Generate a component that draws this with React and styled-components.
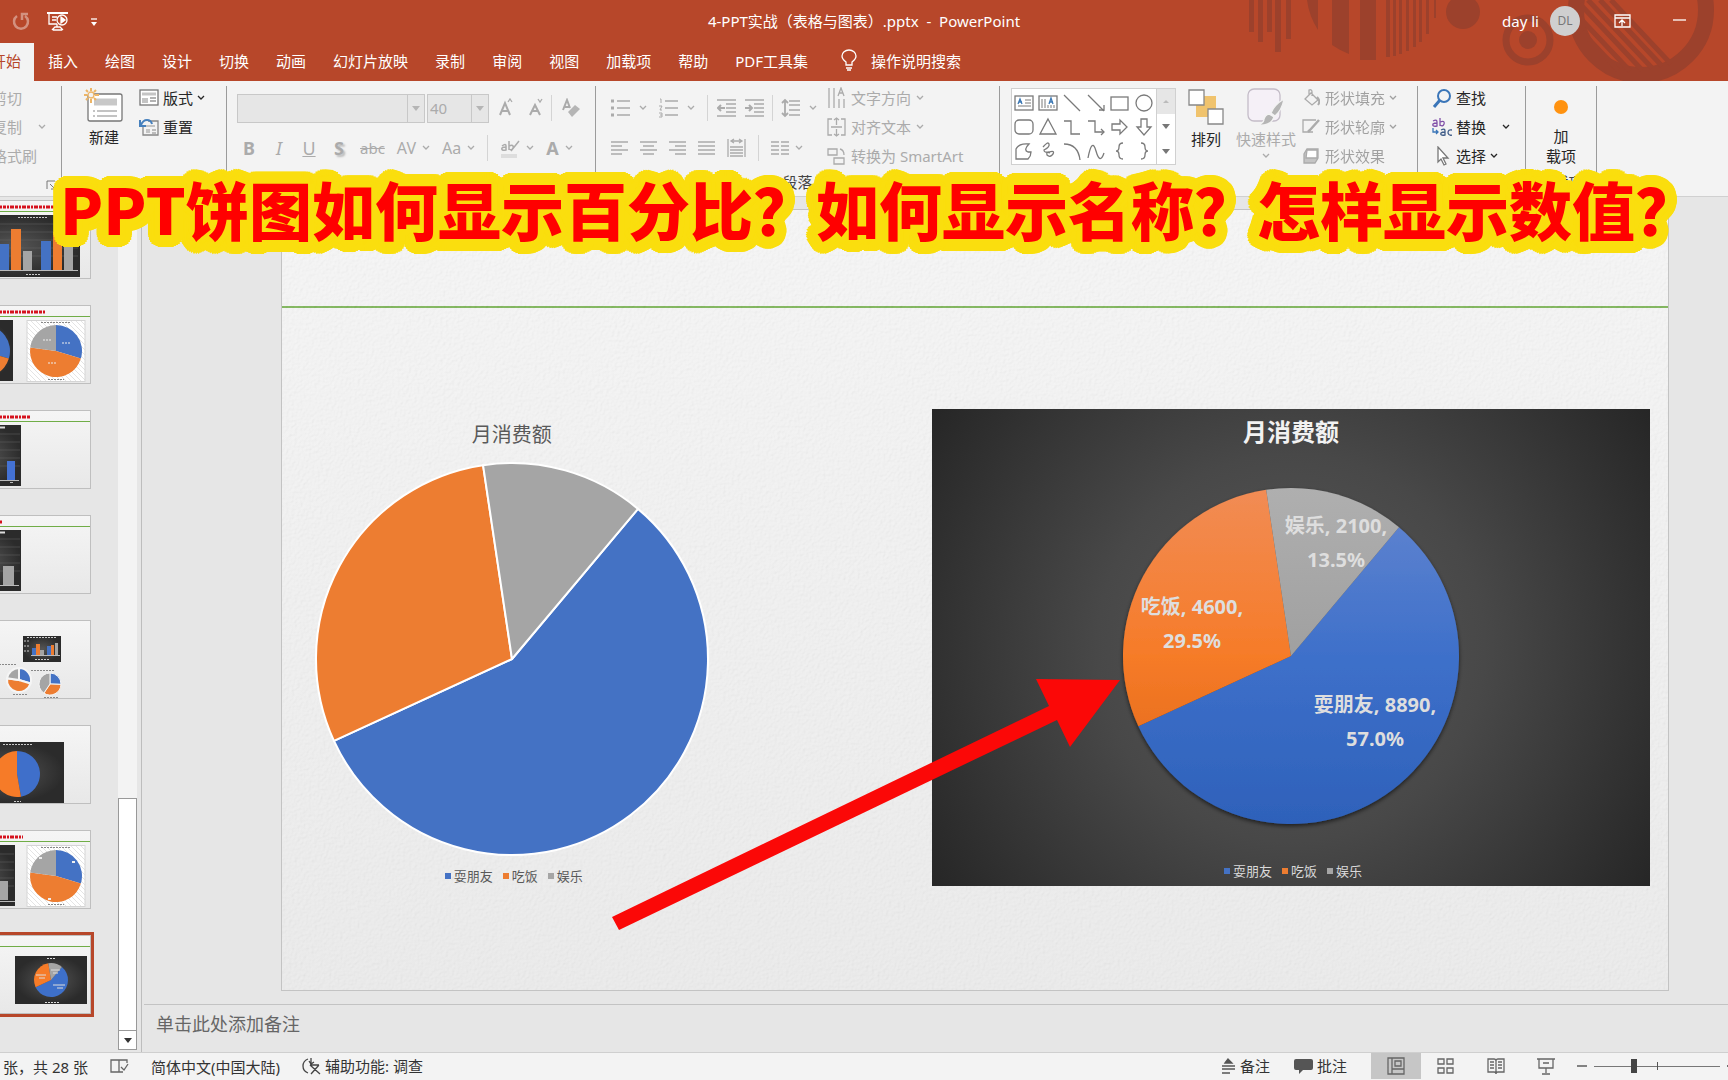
import React from 'react'
import styled, { createGlobalStyle } from 'styled-components'

const GlobalStyle = createGlobalStyle`
    * {
        box-sizing: border-box;
    }

    body {
        margin: 0;
        font-family: 'Noto Sans', 'Noto Sans CJK SC', sans-serif;
        font-size: 15px;
        color: #262626;
    }

    button, input, select, textarea {
        font: inherit;
        color: inherit;
    }
`

const Window = styled.div`
    position: relative;
    display: flex;
    flex-direction: column;
    height: 100vh;
    overflow: hidden;
    background: #e6e6e6;
`

/* ---------- title bar and tabs ---------- */

const Header = styled.header`
    position: relative;
    background: #b7472a;
    color: #fff;
`

const HeaderArt = styled.svg`
    position: absolute;
    top: 0;
    right: 0;
    fill: #9c412c;
    stroke: none;
`

const TitleBar = styled.div`
    position: relative;
    display: grid;
    grid-template-columns: 1fr auto 1fr;
    align-items: center;
    height: 43px;
    padding-bottom: 2px;
`

const PlainButton = styled.button`
    display: inline-flex;
    align-items: center;
    justify-content: center;
    gap: 4px;
    padding: 0;
    border: none;
    background: none;
    white-space: nowrap;
    line-height: 20px;
    opacity: ${props => (props.$faded ? 0.4 : 1)};
`

const QuickAccess = styled.div`
    display: flex;
    align-items: center;
    gap: 17px;
    padding-left: 12px;
`

const DocTitle = styled.h1`
    margin: 0;
    font-size: 15px;
    font-weight: 400;
    white-space: pre;
`

const Account = styled.div`
    display: flex;
    align-items: center;
    justify-content: flex-end;
    padding-right: 42px;
`

const Avatar = styled.span`
    display: flex;
    align-items: center;
    justify-content: center;
    width: 30px;
    height: 30px;
    margin: 0 34px 0 11px;
    border-radius: 50%;
    background: #cfcfcf;
    color: #777;
    font-size: 12px;
`

const MinimizeButton = styled(PlainButton)`
    margin-left: 42px;
`

const Tabs = styled.nav`
    position: relative;
    display: flex;
    height: 38px;
    margin-left: -23px;
`

const Tab = styled.button`
    display: flex;
    align-items: center;
    gap: 14px;
    padding: 0 13px 4px 14px;
    border: none;
    background: ${props => (props.$active ? '#f3f3f3' : 'none')};
    color: ${props => (props.$active ? '#b7472a' : '#fff')};
    white-space: nowrap;
`

const SearchTab = styled(Tab)`
    padding-left: 20px;
`

/* ---------- ribbon ---------- */

const Ribbon = styled.div`
    display: grid;
    grid-template-columns: 62px 165px 369px 404px 418px 108px 71px 1fr;
    height: 116px;
    padding: 3px 0;
    background: #f3f3f3;
    border-bottom: 1px solid #d0d0d0;
`

const Group = styled.section`
    position: relative;
    display: flex;
    min-width: 0;
    margin: 2px 0 1px;
    padding-left: ${props => props.$pad || 0}px;
    border-right: 1px solid #9b9b9b;
    color: ${props => (props.$muted ? '#ababab' : 'inherit')};
`

const GroupName = styled.span`
    position: absolute;
    left: 0;
    right: 0;
    bottom: 0;
    text-align: center;
    color: #444;
    line-height: 20px;
`

const Launcher = styled.svg`
    position: absolute;
    right: 5px;
    bottom: 2px;
`

const Stack = styled.div`
    display: flex;
    flex-direction: column;
    align-items: flex-start;
    margin-left: ${props => props.$left || 0}px;
`

const ToolStack = styled(Stack)`
    padding-top: 2px;
`

const Command = styled(PlainButton)`
    height: 29px;
    margin-top: ${props => (props.$first ? '-3px' : '0')};
    gap: ${props => props.$gap || 4}px;
`

const BigCommand = styled(PlainButton)`
    flex-direction: column;
    justify-content: flex-start;
    gap: 4px;
    width: ${props => props.$width}px;
    padding-top: 2px;
    color: ${props => (props.$muted ? '#ababab' : 'inherit')};
`

const ToolRow = styled.div`
    display: flex;
    align-items: center;
    height: 40px;
    padding-left: ${props => props.$left || 0}px;
    gap: ${props => props.$gap}px;
`

const Tool = styled(PlainButton)`
    justify-content: ${props => (props.$start ? 'flex-start' : 'center')};
    gap: ${props => (props.$start ? 9 : 6)}px;
    min-width: ${props => props.$width || 18}px;
    font-size: ${props => props.$size || 18}px;
    font-weight: ${props => (props.$bold ? 700 : 400)};
    font-style: ${props => (props.$italic ? 'italic' : 'normal')};
    text-decoration: ${props => props.$line || 'none'};
    text-shadow: ${props => (props.$shadow ? '2px 2px 2px #bbb' : 'none')};
`

const Divider = styled.span`
    width: 1px;
    height: 26px;
    background: #d4d4d4;
`

const Combo = styled.label`
    display: flex;
    align-items: center;
    width: ${props => props.$width}px;
    height: 29px;
    border: 1px solid #c8c8c8;
    background: #e6e6e6;

    select {
        flex: 1;
        min-width: 0;
        height: 100%;
        padding: 0 2px;
        border: none;
        border-right: 1px solid #c8c8c8;
        background: none;
        color: #ababab;
        appearance: none;
        opacity: 1;
    }

    svg {
        margin: 0 4px;
    }
`

const Gallery = styled.div`
    display: flex;
    height: 77px;
    margin-top: 2px;
    border: 1px solid #d0d0d0;
    background: #fff;
`

const ShapeGrid = styled.div`
    display: grid;
    grid-template-columns: repeat(6, 24px);
    grid-auto-rows: 24px;
    padding: 2px 0;
    color: #7a7a7a;
`

const GalleryScroll = styled.div`
    display: grid;
    grid-template-rows: repeat(3, 1fr);
    width: 19px;
    border-left: 1px solid #d0d0d0;

    button:first-child {
        background: #e6e6e6;
    }
`

/* ---------- work area ---------- */

const Workspace = styled.div`
    display: flex;
    flex: 1;
    min-height: 0;
`

const Sidebar = styled.aside`
    display: flex;
    justify-content: space-between;
    width: 142px;
    border-right: 1px solid #bdbdbd;
    overflow: hidden;
`

const ThumbList = styled.div`
    display: flex;
    flex-direction: column;
    flex: none;
    gap: 26px;
    margin-left: -52px;
    padding-top: 3px;
`

const Thumb = styled.button`
    display: block;
    padding: 0;
    border: 1px solid #bfbfbf;
    background: linear-gradient(#f5f5f5, #e8e8e8);
    outline: ${props => (props.$selected ? '3px solid #b7472a' : 'none')};

    svg {
        display: block;
    }
`

const ScrollTrack = styled.div`
    display: flex;
    flex-direction: column;
    width: 19px;
    margin: 1px 4px 2px 0;
    background: #f3f3f3;
`

const ScrollPart = styled.div`
    display: flex;
    align-items: center;
    justify-content: center;
    height: 20px;
    border: 1px solid #999;
    background: #fff;
`

const ScrollGap = styled.div`
    flex: 581;
`

const ScrollThumb = styled(ScrollPart)`
    flex: 231;
    margin-bottom: -1px;
`

const Main = styled.main`
    display: flex;
    flex-direction: column;
    flex: 1;
    min-width: 0;
    padding-left: 2px;
`

const SlideArea = styled.div`
    display: flex;
    flex: 1;
    min-height: 0;
    padding: 12px 59px 13px 137px;
`

const Slide = styled.article`
    position: relative;
    display: flex;
    flex-direction: column;
    flex: 1;
    border: 1px solid #c3c3c3;
    background: linear-gradient(#f5f5f5, #e9e9e9);
`

const Paper = styled.svg`
    position: absolute;
    inset: 0;
    width: 100%;
    height: 100%;
    opacity: 0.16;
`

const SlideHead = styled.div`
    height: 98px;
    border-bottom: 2px solid #70ad47;
`

const SlideBody = styled.div`
    position: relative;
    display: flex;
    justify-content: space-between;
    padding: 101px 18px 0 0;
`

const Chart = styled.figure`
    display: flex;
    flex-direction: column;
    align-items: center;
    width: 33.6%;
    margin: 0;
    padding-top: 10px;
    color: #595959;
`

const DarkChart = styled(Chart)`
    width: 52.5%;
    padding: 7px 0 5px;
    background: radial-gradient(circle, #595959 0%, #484848 45%, #262626 100%);
    color: #d9d9d9;
`

const ChartTitle = styled.figcaption`
    margin-bottom: ${props => (props.$dark ? 39 : 11)}px;
    color: ${props => (props.$dark ? '#f2f2f2' : '#595959')};
    font-size: ${props => (props.$dark ? 24 : 20)}px;
    font-weight: ${props => (props.$dark ? 700 : 400)};
    line-height: 32px;
`

const PieSvg = styled.svg`
    overflow: visible;

    text {
        fill: #dedede;
        font-size: 20px;
        font-weight: 700;
        text-anchor: middle;
        dominant-baseline: central;
    }
`

const Legend = styled.ul`
    display: flex;
    gap: 10px;
    margin: ${props => (props.$dark ? 36 : 10)}px 0 0;
    padding: 0 0 0 4px;
    list-style: none;
    font-size: 13px;
    line-height: 20px;
`

const LegendItem = styled.li`
    display: flex;
    align-items: center;
    gap: 3px;

    &::before {
        content: '';
        width: 6px;
        height: 6px;
        background: ${props => props.$color};
    }
`

const Arrow = styled.svg`
    position: absolute;
    left: 330px;
    top: 469px;
    fill: #fb0807;
`

const Notes = styled.textarea`
    height: 48px;
    padding: 5px 12px;
    border: none;
    border-top: 1px solid #c3c3c3;
    background: none;
    font-size: 18px;
    line-height: 28px;
    resize: none;

    &::placeholder {
        color: #666;
        opacity: 1;
    }
`

/* ---------- status bar ---------- */

const StatusBar = styled.footer`
    display: flex;
    align-items: center;
    justify-content: space-between;
    height: 28px;
    border-top: 1px solid #cfcfcf;
    background: #f3f3f3;
    color: #333;
    overflow: hidden;
`

const StatusSide = styled.div`
    display: flex;
    align-items: center;
    height: 100%;
    gap: ${props => props.$gap}px;
    padding: 0 0 1px 3px;
    white-space: nowrap;
`

const ViewButtons = styled.div`
    display: flex;
    height: 100%;
`

const ViewButton = styled(PlainButton)`
    width: 50px;
    background: ${props => (props.$active ? '#c6c6c6' : 'none')};
`

const Zoom = styled.div`
    display: flex;
    align-items: center;
    gap: 7px;
    margin-right: -9px;
    margin-left: -18px;
`

const ZoomSlider = styled.input`
    width: 126px;
    height: 14px;
    margin: 0;
    appearance: none;
    background:
        linear-gradient(#555, #555) center / 1px 8px no-repeat,
        linear-gradient(#777, #777) center / 100% 1px no-repeat;

    &::-webkit-slider-thumb {
        appearance: none;
        width: 6px;
        height: 14px;
        background: #444;
    }
`

/* ---------- caption laid over the window ---------- */

const outline = [6, 12].flatMap(radius =>
    Array.from({ length: 32 }, (_, i) => {
        const a = (i / 32) * Math.PI * 2
        return `${(Math.cos(a) * radius).toFixed(1)}px ${(Math.sin(a) * radius).toFixed(1)}px 0 #fade0e`
    })
).join(', ')

const Caption = styled.p`
    position: absolute;
    top: 176px;
    left: 60px;
    margin: 0;
    color: #ff0000;
    font-family: 'Noto Sans CJK SC', sans-serif;
    font-size: 63px;
    font-weight: 900;
    line-height: 64px;
    white-space: nowrap;
    text-shadow: ${outline};
    pointer-events: none;
`

/* ---------- drawings ---------- */

const Icon = ({ w = 18, h = 18, box, color = 'currentColor', children }) => (
    <svg width={w} height={h} viewBox={box || `0 0 ${w} ${h}`} fill='none' stroke={color} strokeWidth='1.3' aria-hidden='true'>
        {children}
    </svg>
)

const Caret = () => (
    <Icon w={8} h={6}><path d='M1 1l3 3 3-3' /></Icon>
)

const Triangle = ({ up, color = '#888' }) => (
    <Icon w={8} h={5} color='none'><path d={up ? 'M1 4h6L4 1z' : 'M0 0h8L4 5z'} fill={color} /></Icon>
)

const ListIcon = ({ numbered }) => (
    <Icon w={19} h={20}>
        <path d='M6 3h13M6 10h13M6 17h13' />
        {numbered
            ? <path d='M1 1h1v4M0 8h3l-2 4h2M0 15h3v4H0M1 17h2' strokeWidth='1' />
            : <path d='M0 3h3M0 10h3M0 17h3' strokeWidth='3' />}
    </Icon>
)

const IndentIcon = ({ outdent }) => (
    <Icon w={19} h={18}>
        <path d='M0 1h19M9 5h10M9 9h10M9 13h10M0 17h19' />
        <path d={outdent ? 'M8 9H1M4 6L1 9l3 3' : 'M0 9h7M4 6l3 3-3 3'} strokeWidth='2' />
    </Icon>
)

const AlignIcon = ({ d }) => (
    <Icon w={17} h={14}><path d={d} /></Icon>
)

const point = (deg, r) => {
    const a = (deg * Math.PI) / 180
    return `${(Math.sin(a) * r).toFixed(2)} ${(-Math.cos(a) * r).toFixed(2)}`
}

const Slice = ({ from, to, r, ...rest }) => (
    <path d={`M0 0L${point(from, r)}A${r} ${r} 0 ${to - from > 180 ? 1 : 0} 1 ${point(to, r)}Z`} {...rest} />
)

const BLUE = '#4472c4'
const ORANGE = '#ed7d31'
const GREY = '#a5a5a5'

const spending = [
    { name: '耍朋友', value: 8890, share: '57.0%', color: BLUE, fill: 'url(#blueFill)', x: 84, y: 48 },
    { name: '吃饭', value: 4600, share: '29.5%', color: ORANGE, fill: 'url(#orangeFill)', x: -99, y: -50 },
    { name: '娱乐', value: 2100, share: '13.5%', color: GREY, fill: 'url(#greyFill)', x: 45, y: -131 },
]

const total = spending.reduce((sum, item) => sum + item.value, 0)
let angle = 40
const slices = spending.map(item => {
    const from = angle
    angle += (item.value / total) * 360
    return { ...item, from, to: angle }
})

const LightPie = () => (
    <PieSvg width='394' height='394' viewBox='-197 -197 394 394'>
        {slices.map(s => (
            <Slice key={s.name} from={s.from} to={s.to} r={196} fill={s.color} stroke='#fff' strokeWidth='2' strokeLinejoin='round' />
        ))}
    </PieSvg>
)

const Gradient = ({ id, top, mid, bottom }) => (
    <linearGradient id={id} gradientUnits='userSpaceOnUse' x1='0' y1='-168' x2='0' y2='168'>
        <stop offset='0' stopColor={top} />
        <stop offset='0.5' stopColor={mid} />
        <stop offset='1' stopColor={bottom} />
    </linearGradient>
)

const DarkPie = () => (
    <PieSvg width='338' height='338' viewBox='-169 -169 338 338'>
        <defs>
            <Gradient id='blueFill' top='#6486d0' mid='#3e70ca' bottom='#2e61ba' />
            <Gradient id='orangeFill' top='#f18c55' mid='#f67b28' bottom='#dc6414' />
            <Gradient id='greyFill' top='#afafaf' mid='#a0a0a0' bottom='#8f8f8f' />
            <filter id='pieShadow' x='-10%' y='-10%' width='120%' height='120%'>
                <feDropShadow dx='0' dy='2' stdDeviation='2' floodOpacity='0.6' />
            </filter>
        </defs>
        <g filter='url(#pieShadow)'>
            {slices.map(s => <Slice key={s.name} from={s.from} to={s.to} r={168} fill={s.fill} />)}
        </g>
        {slices.map(s => (
            <React.Fragment key={s.name}>
                <text x={s.x} y={s.y}>{`${s.name}, ${s.value},`}</text>
                <text x={s.x} y={s.y + 34}>{s.share}</text>
            </React.Fragment>
        ))}
    </PieSvg>
)

const ChartLegend = ({ dark }) => (
    <Legend $dark={dark}>
        {spending.map(item => <LegendItem key={item.name} $color={item.color}>{item.name}</LegendItem>)}
    </Legend>
)

const MiniPie = ({ x, y, r, cuts, colors, gap }) => (
    <g transform={`translate(${x} ${y})`} stroke={gap ? '#f5f5f5' : 'none'} strokeWidth={gap}>
        {colors.map((color, i) => <Slice key={i} from={cuts[i]} to={cuts[i + 1]} r={r} fill={color} />)}
    </g>
)

const MiniBars = ({ bars, base }) => bars.map(([x, y, w, color]) => (
    <rect key={x} x={x} y={y} width={w} height={base - y} fill={color} />
))

const MiniHead = ({ to }) => (
    <>
        {to && <path d={`M-45 7H${to}`} stroke='#d5121e' strokeWidth='3' strokeDasharray='3 1 2 1 4 1' />}
        <path d='M-51 11.5h141' stroke='#70ad47' />
    </>
)

const MiniDark = ({ x = -51, y = 15, to, h = 61 }) => (
    <rect x={x} y={y} width={to - x} height={h} fill='url(#thumbDark)' />
)

const MiniGrid = ({ to }) => (
    <path d={`M-51 24H${to}M-51 32H${to}M-51 40H${to}M-51 48H${to}M-51 56H${to}`} stroke='#666' strokeWidth='0.5' />
)

const CardPie = () => (
    <>
        <rect x='27' y='15.5' width='58' height='61' fill='url(#hatch)' stroke='#d5d5d5' />
        <path d='M41 17.500h29M48 74.500h16' stroke='#888' strokeDasharray='2 1' />
        <MiniPie x={56} y={46} r={26} cuts={[0, 107, 278, 360]} colors={[BLUE, ORANGE, GREY]} />
    </>
)

const thumbs = [
    <>
        <MiniHead to={54} />
        <MiniDark to={80} h={62} />
        <MiniGrid to={78} />
        <path d='M18 17.500h30M26 74.500h15' stroke='#ccc' strokeDasharray='2 1' />
        <MiniBars base={70} bars={[[0, 44, 9, BLUE], [11, 29, 10, ORANGE], [23, 51, 9, GREY], [41, 41, 10, BLUE], [53, 32, 9, ORANGE], [64, 27, 9, GREY]]} />
        <path d='M-51 70.500H78' stroke='#bbb' />
    </>,
    <>
        <MiniHead to={45} />
        <MiniDark to={13} />
        <MiniPie x={-16} y={46} r={26} cuts={[0, 107, 278, 360]} colors={[BLUE, ORANGE, GREY]} />
        <CardPie />
        <path d='M43 35h8M62 38h9M48 58h9' stroke='#eee' strokeDasharray='2 1' />
    </>,
    <>
        <MiniHead to={31} />
        <MiniDark to={21} />
        <MiniGrid to={20} />
        <path d='M0 17.500h5' stroke='#ddd' strokeWidth='2' />
        <MiniBars base={70} bars={[[7, 51, 8, '#4472d4']]} />
        <path d='M-51 70.500H19M10 72.500h3' stroke='#bbb' />
    </>,
    <>
        <MiniHead to={2} />
        <MiniDark to={21} />
        <MiniGrid to={20} />
        <path d='M0 17.500h5' stroke='#ddd' strokeWidth='2' />
        <MiniBars base={70} bars={[[3, 51, 11, GREY]]} />
        <path d='M-51 70.500H19' stroke='#bbb' />
    </>,
    <>
        <MiniDark x={23} y={16} to={61} h={26} />
        <path d='M27 17.500h29M24 21h5M24 26h5M24 31h5M35 39.500h14' stroke='#ccc' strokeDasharray='2 1' />
        <MiniBars base={35} bars={[[32, 28, 4, BLUE], [36, 24, 4, ORANGE], [40, 30, 4, GREY], [47, 26, 4, BLUE], [51, 25, 3, ORANGE], [55, 23, 3, GREY]]} />
        <path d='M31 35.500h29' stroke='#bbb' />
        <path d='M-10 44.500h26M31 50.500h24M13 74.500h14M44 77.500h14' stroke='#888' strokeDasharray='2 1' />
        <MiniPie x={19} y={60} r={12} cuts={[0, 107, 278, 360]} colors={[BLUE, ORANGE, GREY]} gap={2} />
        <MiniPie x={50} y={64} r={11} cuts={[0, 92, 214, 360]} colors={[BLUE, ORANGE, GREY]} gap={1} />
    </>,
    <>
        <MiniDark y={17} to={64} />
        <path d='M3 19.500h29M14 76.500h7' stroke='#ccc' strokeDasharray='2 1' />
        <MiniPie x={17} y={49} r={23} cuts={[0, 170, 360]} colors={['#3f6fca', '#f67b28']} />
    </>,
    <>
        <MiniHead to={23} />
        <MiniDark to={15} />
        <MiniGrid to={14} />
        <MiniBars base={70} bars={[[-9, 51, 17, GREY]]} />
        <path d='M-51 71.500H15' stroke='#bbb' />
        <CardPie />
        <path d='M39 28h3M72 32h3M48 69h3' stroke='#eee' strokeWidth='2' />
    </>,
    <>
        <MiniHead />
        <MiniDark x={15} y={21} to={87} h={48} />
        <path d='M47 23.500h9M45 67.500h14' stroke='#ddd' strokeDasharray='2 1' />
        <MiniPie x={51} y={45} r={17} cuts={[40, 245, 351, 400]} colors={['#3e70ca', '#f67b28', GREY]} />
        <path d='M36 40h10M39 43h6M51 35h9M53 38h5M53 50h12M57 53h6' stroke='#ddd' strokeWidth='1' />
    </>,
]

const shapes = [
    <><rect x='1' y='3' width='18' height='14' /><path d='M11 7h6M11 10h6M4 13h13' strokeWidth='1' /><path d='M4 11l2-5 2 5M5 9h3' stroke='#3c78b4' /></>,
    <><rect x='1' y='3' width='18' height='14' /><path d='M4 6v9M7 6v9M10 12v3M13 12v3M16 12v3' strokeWidth='1' /><path d='M11 11l2-6 2 6M12 9h3' stroke='#3c78b4' /></>,
    <path d='M2 2l16 16' />,
    <><path d='M2 2l16 16' /><path d='M13 17h5v-5' /></>,
    <rect x='1' y='4' width='17' height='13' />,
    <circle cx='10' cy='10' r='8' />,
    <rect x='1' y='3' width='18' height='14' rx='4' />,
    <path d='M10 2l8 15H2z' />,
    <path d='M2 4h7v13h9' />,
    <><path d='M2 4h7v11h9' /><path d='M15 12l3 3-3 3' /></>,
    <path d='M2 7h8V3l7 7-7 7v-4H2z' />,
    <path d='M7 2h6v8h4l-7 8-7-8h4z' />,
    <path d='M2 18V8q3-6 13-5-6 6-1 8h3q0 4-3 7z' />,
    <path d='M5 6q5-6 6-3t-5 6q0 3 5 2 6-2 4 2-3 4-6 1-1-4 3-2' />,
    <path d='M2 3q14 0 16 16' />,
    <path d='M2 17Q6-4 10 10t8 2' />,
    <path d='M13 2q-4 0-4 4t-3 4q3 0 3 4t4 4' />,
    <path d='M7 2q4 0 4 4t3 4q-3 0-3 4t-4 4' />,
]

const App = () => (
    <Window>
        <GlobalStyle />
        <Header>
            <HeaderArt width='480' height='81' viewBox='1248 0 480 81'>
                <path d='M1249 0h5v32h-5zM1258 0h5v42h-5zM1267 0h5v32h-5zM1275 0h6v52h-6zM1286 0h5v39h-5z' />
                <path d='M1307 0h11v30q-9-14-11-30zM1332 0h17v54q-10-4-17-9zM1360 0h16v60h-16z' />
                <path d='M1386 0h4v57h-4zM1393 0h3v56h-3zM1399 0h3v54h-3zM1406 0h3v51h-3zM1413 0h3v47h-3zM1419 0h3v42h-3zM1426 0h3v34h-3zM1434 0h2v18h-2z' />
                <circle cx='1463' cy='12' r='17' />
                <circle cx='1528' cy='40' r='9' />
                <circle cx='1528' cy='40' r='22' fill='none' stroke='#9c412c' strokeWidth='7' />
                <circle cx='1641' cy='10' r='65' fill='none' stroke='#9c412c' strokeWidth='16' />
                <path d='M1611 0l60 64M1600 0l62 66M1588 0l64 68M1580 4l62 66M1580 18l50 53M1582 32l36 38' stroke='#9c412c' strokeWidth='5' />
            </HeaderArt>
            <TitleBar>
                <QuickAccess>
                    <PlainButton aria-label='恢复' $faded>
                        <Icon w={18} h={18} color='#fff'><path d='M5 4a7 7 0 1 0 8 0M10 8V2h6' strokeWidth='2.500' /></Icon>
                    </PlainButton>
                    <PlainButton aria-label='从头开始'>
                        <Icon w={21} h={20} color='#fff'>
                            <path d='M0 2h21' strokeWidth='2' />
                            <path d='M2 2v11h8M5 6h5M5 9h4M10 13v3M5 19l3-3h5l3 3M6 19h9' />
                            <circle cx='15' cy='9' r='5' /><path d='M14 6l4 3-4 3z' fill='#fff' />
                        </Icon>
                    </PlainButton>
                    <PlainButton aria-label='自定义快速访问工具栏'>
                        <Icon w={22} h={10} color='#fff'><path d='M6 3h6' /><path d='M6 6h6l-3 4z' fill='#fff' stroke='none' /></Icon>
                    </PlainButton>
                </QuickAccess>
                <DocTitle>4-PPT实战（表格与图表）.pptx  -  PowerPoint</DocTitle>
                <Account>
                    <span>day li</span>
                    <Avatar>DL</Avatar>
                    <PlainButton aria-label='功能区显示选项'>
                        <Icon w={17} h={14} color='#fff'><path d='M1 1h15v12H1zM1 4h15M8 12V6M5 9l3-3 3 3' /></Icon>
                    </PlainButton>
                    <MinimizeButton aria-label='最小化'>
                        <Icon w={13} h={6} color='#fff'><path d='M0 2h13' /></Icon>
                    </MinimizeButton>
                </Account>
            </TitleBar>
            <Tabs>
                <Tab $active>开始</Tab>
                {['插入', '绘图', '设计', '切换', '动画', '幻灯片放映', '录制', '审阅', '视图', '加载项', '帮助', 'PDF工具集'].map(name => (
                    <Tab key={name}>{name}</Tab>
                ))}
                <SearchTab>
                    <Icon w={16} h={22} color='#fff'>
                        <path d='M5 16v-3Q1 10 1 7a7 6 0 0 1 14 0q0 3-4 6v3zM5 19h6M6 21h4' />
                    </Icon>
                    操作说明搜索
                </SearchTab>
            </Tabs>
        </Header>

        <Ribbon>
            <Group $muted>
                <Stack $left={-8}>
                    <Command $first>剪切</Command>
                    <Command $gap={16}>复制 <Caret /></Command>
                    <Command>格式刷</Command>
                </Stack>
                <Launcher width='10' height='10' fill='none' stroke='#777'><path d='M1 9V1h8M4 4l5 5M9 5v4H5' /></Launcher>
            </Group>

            <Group $pad={12}>
                <BigCommand $width={60}>
                    <Icon w={40} h={35}>
                        <rect x='4' y='6' width='34' height='27' rx='2' fill='#fff' stroke='#777' />
                        <path d='M10 14h23' stroke='#c8c8c8' strokeWidth='7' />
                        <path d='M9 23h2M13 23h20M9 28h2M13 28h20' stroke='#b0b0b0' />
                        <circle cx='7' cy='7' r='3' fill='#f3f3f3' stroke='#edb566' />
                        <path d='M7 0v3M7 11v4M0 7h3M11 7h4M2 2l2 2M10 10l2 2M2 12l2-2M10 4l2-2' stroke='#edb566' strokeWidth='2' />
                    </Icon>
                    新建
                </BigCommand>
                <Stack $left={5}>
                    <Command $first>
                        <Icon w={20} h={18}><rect x='1' y='1' width='18' height='15' fill='#fff' stroke='#777' /><path d='M3 5h14' stroke='#c4c4c4' strokeWidth='3' /><path d='M3 9h6v5H3z' fill='#c4c4c4' stroke='none' /><path d='M11 9h6M11 12h6' stroke='#999' /></Icon>
                        版式 <Caret />
                    </Command>
                    <Command>
                        <Icon w={20} h={18}><path d='M9 3h10v14H4V9' stroke='#888' /><path d='M7 8h9' stroke='#c4c4c4' strokeWidth='2' /><path d='M7 11h4v4H7z' fill='#c4c4c4' stroke='none' /><path d='M13 12h4M13 15h4' stroke='#aaa' /><path d='M2 7q2-5 6-5 4 0 5 4M1 2v6h6' stroke='#4680bd' strokeWidth='2' /></Icon>
                        重置
                    </Command>
                </Stack>
            </Group>

            <Group $muted $pad={10}>
                <ToolStack>
                    <ToolRow $gap={2}>
                        <Combo $width={188}>
                            <select aria-label='字体' disabled defaultValue=''><option value='' /></select>
                            <Triangle color='#b5b5b5' />
                        </Combo>
                        <Combo $width={62}>
                            <select aria-label='字号' disabled defaultValue='40'><option>40</option></select>
                            <Triangle color='#b5b5b5' />
                        </Combo>
                        <Tool $width={30} aria-label='增大字号'><Icon w={16} h={20}><path d='M2 17L7 5l5 12M4 13h6' strokeWidth='2' /><path d='M10 4l2-3 2 3' /></Icon></Tool>
                        <Tool $width={26} aria-label='减小字号'><Icon w={16} h={20}><path d='M2 17L7 7l5 10M4 13h6' strokeWidth='2' /><path d='M10 1l2 3 2-3' /></Icon></Tool>
                        <Divider />
                        <Tool $width={34} aria-label='清除格式'><Icon w={18} h={20}><path d='M1 12L5 2l3 8M3 9h5' strokeWidth='2' /><path d='M6 14l7-7 5 4-8 8z' fill='#b5b5b5' stroke='none' /></Icon></Tool>
                    </ToolRow>
                    <ToolRow $gap={12} $left={3}>
                        <Tool $bold>B</Tool>
                        <Tool $italic>I</Tool>
                        <Tool $line='underline'>U</Tool>
                        <Tool $bold $shadow>S</Tool>
                        <Tool $size={15} $line='line-through'>abc</Tool>
                        <Tool $size={16}>AV <Caret /></Tool>
                        <Tool $size={16}>Aa <Caret /></Tool>
                        <Divider />
                        <Tool aria-label='文本突出显示颜色'><Icon w={20} h={20}><path d='M2 8q4-3 4 0v4q-5 1-4-2 1-1 4-1M9 3v9M9 8q5-2 4 2-1 3-4 1M19 3l-8 10' strokeWidth='1.500' /><path d='M1 18h16' stroke='#ddd' strokeWidth='4' /></Icon><Caret /></Tool>
                        <Tool $bold>A <Caret /></Tool>
                    </ToolRow>
                </ToolStack>
            </Group>

            <Group $muted $pad={15}>
                <ToolStack>
                    <ToolRow $gap={8}>
                        <Tool $start $width={40} aria-label='项目符号'><ListIcon /><Caret /></Tool>
                        <Tool $start $width={40} aria-label='编号'><ListIcon numbered /><Caret /></Tool>
                        <Divider />
                        <Tool $width={20} aria-label='减少缩进'><IndentIcon outdent /></Tool>
                        <Tool $width={20} aria-label='增加缩进'><IndentIcon /></Tool>
                        <Divider />
                        <Tool $start $width={40} aria-label='行距'><Icon w={19} h={20}><path d='M8 3h11M8 7h11M8 12h11M8 17h11' /><path d='M4 2v16M1 5l3-3 3 3M1 15l3 3 3-3' strokeWidth='1.800' /></Icon><Caret /></Tool>
                    </ToolRow>
                    <ToolRow $gap={12}>
                        <AlignIcon d='M0 1h17M0 5h11M0 9h17M0 13h11' />
                        <AlignIcon d='M0 1h17M3 5h11M0 9h17M3 13h11' />
                        <AlignIcon d='M0 1h17M6 5h11M0 9h17M6 13h11' />
                        <AlignIcon d='M0 1h17M0 5h17M0 9h17M0 13h17' />
                        <Icon w={19} h={20}><path d='M1 1v18M18 1v18M4 3h11M7 1L4 3l3 2M12 1l3 2-3 2M3 9h13M3 12h13M3 15h13M3 18h13' /></Icon>
                        <Divider />
                        <Tool aria-label='分栏'><Icon w={18} h={14}><path d='M0 1h8M10 1h8M0 5h8M10 5h8M0 9h8M10 9h8M0 13h8M10 13h8' /></Icon><Caret /></Tool>
                    </ToolRow>
                </ToolStack>
                <Stack $left={6}>
                    <Command $first $gap={5}>
                        <Icon w={19} h={22}><path d='M2 1v20M7 1v20M12 12v9M17 12v9M11 9l3-8 3 8M12 6h4' /></Icon>
                        文字方向 <Caret />
                    </Command>
                    <Command $gap={5}>
                        <Icon w={19} h={20}><path d='M5 2H1v16h4M14 2h4v16h-4M4 10h11M9.500 1v7M7 3l2.500-2L12 3M9.500 19v-7M7 17l2.500 2 2.500-2' /></Icon>
                        对齐文本 <Caret />
                    </Command>
                    <Command $gap={5}>
                        <Icon w={19} h={20}><path d='M1 3h9v6H1zM7 12h10v6H7zM13 3q4 1 4 6' /></Icon>
                        转换为 SmartArt
                    </Command>
                </Stack>
                <GroupName>段落</GroupName>
                <Launcher width='10' height='10' fill='none' stroke='#bbb'><path d='M1 9V1h8M4 4l5 5M9 5v4H5' /></Launcher>
            </Group>

            <Group $pad={11}>
                <Stack>
                    <Gallery>
                        <ShapeGrid>
                            {shapes.map((shape, i) => (
                                <PlainButton key={i} aria-label={`形状 ${i + 1}`}><Icon w={20} h={20}>{shape}</Icon></PlainButton>
                            ))}
                        </ShapeGrid>
                        <GalleryScroll>
                            <PlainButton aria-label='上一行'><Triangle up color='#bbb' /></PlainButton>
                            <PlainButton aria-label='下一行'><Triangle color='#777' /></PlainButton>
                            <PlainButton aria-label='其他'><Triangle color='#777' /></PlainButton>
                        </GalleryScroll>
                    </Gallery>
                </Stack>
                <BigCommand $width={60}>
                    <Icon w={36} h={37}>
                        <path d='M15 8h13v13H15z' fill='#f0c36d' stroke='none' /><path d='M8 17h12v12H8z' fill='#f0c36d' stroke='none' />
                        <path d='M1 2h15v15H1zM20 21h15v15H20z' fill='#fff' stroke='#888' />
                    </Icon>
                    排列
                </BigCommand>
                <BigCommand $width={60} $muted>
                    <Icon w={38} h={37}>
                        <rect x='1' y='1' width='32' height='32' rx='6' fill='#f5f0f7' stroke='#c4bcc8' />
                        <path d='M37 11q-10 6-13 14l4 3q7-6 9-17zM22 26l5 3q-3 9-16 8 6-2 6-6 1-4 5-5z' fill='#b5b5b5' stroke='#f3f3f3' />
                    </Icon>
                    快速样式
                    <Caret />
                </BigCommand>
                <Stack $left={6}>
                    <Command as='div' $first $gap={5}>
                        <Icon w={18} h={18} color='#ababab'><path d='M3 10l6-6 7 7-6 5zM7 6V1q3-1 3 2v4' /><path d='M15 8q4 4 1 8' strokeWidth='2' /></Icon>
                        <PlainButton $faded>形状填充 <Caret /></PlainButton>
                    </Command>
                    <Command as='div' $gap={5}>
                        <Icon w={18} h={18} color='#ababab'><path d='M14 2H1v12h10' /><path d='M17 2L8 12l-2 2' strokeWidth='2.500' /></Icon>
                        <PlainButton $faded>形状轮廓 <Caret /></PlainButton>
                    </Command>
                    <Command as='div' $gap={5}>
                        <Icon w={18} h={18} color='#ababab'><path d='M5 2h11v9l-3 5H2v-9z' fill='#c4c4c4' /><path d='M5 3h10v8H4z' fill='#fff' /></Icon>
                        <PlainButton $faded>形状效果</PlainButton>
                    </Command>
                </Stack>
            </Group>

            <Group $pad={14}>
                <Stack>
                    <Command $first>
                        <Icon w={20} h={20} color='#3a75b8'><circle cx='12' cy='8' r='6' strokeWidth='2' /><path d='M8 12l-6 7' strokeWidth='3' /></Icon>
                        查找
                    </Command>
                    <Command>
                        <Icon w={20} h={20} color='#8050a8'>
                            <path d='M1 4q4-2 4 1v4q-5 1-4-2 1-1 4-1M8 1v8M8 5q5-2 4 2-1 3-4 1' />
                            <path d='M1 11v4h5M4 13l2 2-2 2' stroke='#3a75b8' />
                            <path d='M9 13q4-2 4 1v4q-5 1-4-2 1-1 4-1M20 13q-4-1-4 3 1 3 4 2' stroke='#3f5c88' />
                        </Icon>
                        <span>替换</span>&nbsp;&nbsp;<Caret />
                    </Command>
                    <Command>
                        <Icon w={20} h={20} color='#777'><path d='M6 1v15l3-3 3 6 2-1-3-6h5z' fill='#fff' /></Icon>
                        选择 <Caret />
                    </Command>
                </Stack>
            </Group>

            <Group>
                <BigCommand $width={70}>
                    <Icon w={34} h={34}><circle cx='17' cy='19' r='7' fill='#ff9210' stroke='none' /></Icon>
                    <span>加<br />载项</span>
                </BigCommand>
                <GroupName>加载项</GroupName>
            </Group>
        </Ribbon>

        <Workspace>
            <Sidebar>
                <ThumbList>
                    {thumbs.map((drawing, i) => (
                        <Thumb key={i} $selected={i === thumbs.length - 1} aria-label={`幻灯片 ${i + 21}`}>
                            <svg width='141' height='77' viewBox='-51 1 141 77'>
                                {i === 0 && (
                                    <defs>
                                        <radialGradient id='thumbDark'><stop stopColor='#555' /><stop offset='1' stopColor='#2b2b2b' /></radialGradient>
                                        <pattern id='hatch' width='5' height='5' patternUnits='userSpaceOnUse'>
                                            <rect width='5' height='5' fill='#fff' /><path d='M0 0l5 5' stroke='#ddd' strokeWidth='0.800' />
                                        </pattern>
                                    </defs>
                                )}
                                {drawing}
                            </svg>
                        </Thumb>
                    ))}
                </ThumbList>
                <ScrollTrack>
                    <ScrollPart><Triangle up color='#333' /></ScrollPart>
                    <ScrollGap />
                    <ScrollThumb />
                    <ScrollPart><Triangle color='#333' /></ScrollPart>
                </ScrollTrack>
            </Sidebar>

            <Main>
                <SlideArea>
                    <Slide>
                        <Paper aria-hidden='true'>
                            <filter id='paper'>
                                <feTurbulence type='fractalNoise' baseFrequency='0.35' numOctaves='3' result='noise' />
                                <feDiffuseLighting in='noise' lightingColor='#fff' surfaceScale='1'>
                                    <feDistantLight azimuth='225' elevation='60' />
                                </feDiffuseLighting>
                            </filter>
                            <rect width='100%' height='100%' filter='url(#paper)' />
                        </Paper>
                        <SlideHead />
                        <SlideBody>
                            <Chart>
                                <ChartTitle>月消费额</ChartTitle>
                                <LightPie />
                                <ChartLegend />
                            </Chart>
                            <DarkChart>
                                <ChartTitle $dark>月消费额</ChartTitle>
                                <DarkPie />
                                <ChartLegend dark />
                            </DarkChart>
                        </SlideBody>
                        <Arrow width='508' height='252' aria-hidden='true'>
                            <path d='M0 238L437 27 424 0l84 1-50 67-13-27L7 251z' />
                        </Arrow>
                    </Slide>
                </SlideArea>
                <Notes aria-label='备注' placeholder='单击此处添加备注' />
            </Main>
        </Workspace>

        <StatusBar>
            <StatusSide $gap={22}>
                <span>张，共 28 张</span>
                <PlainButton aria-label='拼写检查'>
                    <Icon w={19} h={16} color='#666'><path d='M9 2v12H1V2zM9 2h8v3M9 14h4M11 9l3 3 4-6' /></Icon>
                </PlainButton>
                <span>简体中文(中国大陆)</span>
                <PlainButton>
                    <Icon w={19} h={18} color='#444'><path d='M6 2Q1 4 1 9t5 7M9 1v6M7 4l2 3 3-2M8 8l10 9M17 8l-8 9M8 8h9' /></Icon>
                    辅助功能: 调查
                </PlainButton>
            </StatusSide>
            <StatusSide $gap={24}>
                <PlainButton>
                    <Icon w={15} h={16} color='#555'><path d='M4 5l3-4 4 4z' fill='#555' /><path d='M1 8h13M1 11h13M1 15h8' /></Icon>
                    备注
                </PlainButton>
                <PlainButton>
                    <Icon w={19} h={16} color='none'><path d='M2 1h15q2 0 2 2v7q0 2-2 2H9l-4 4v-4H2q-2 0-2-2V3q0-2 2-2z' fill='#555' /></Icon>
                    批注
                </PlainButton>
                <ViewButtons>
                    <ViewButton $active aria-label='普通视图'>
                        <Icon w={18} h={18} color='#666'><path d='M1 1h16v16H1zM5 1v16M5 12h12M8 4h6v5H8z' /></Icon>
                    </ViewButton>
                    <ViewButton aria-label='幻灯片浏览'>
                        <Icon w={18} h={16} color='#666'><path d='M1 1h6v5H1zM10 1h6v5h-6zM1 10h6v5H1zM10 10h6v5h-6z' /></Icon>
                    </ViewButton>
                    <ViewButton aria-label='阅读视图'>
                        <Icon w={18} h={16} color='#666'><path d='M1 1h6q2 0 2 2 0-2 2-2h6v13h-6q-2 0-2 2 0-2-2-2H1zM9 3v12M3 4h4M3 7h4M3 10h4M11 4h4M11 7h4M11 10h4' /></Icon>
                    </ViewButton>
                    <ViewButton aria-label='幻灯片放映'>
                        <Icon w={18} h={18} color='#666'><path d='M0 2h18M2 2v9h14V2M6 6h6M9 11v5M5 17h8' /></Icon>
                    </ViewButton>
                </ViewButtons>
                <Zoom>
                    <PlainButton aria-label='缩小'><Icon w={10} h={10} color='#444'><path d='M0 5h10' /></Icon></PlainButton>
                    <ZoomSlider type='range' aria-label='显示比例' min='0' max='100' defaultValue='31' />
                    <PlainButton aria-label='放大'><Icon w={10} h={10} color='#444'><path d='M0 5h10M5 0v10' /></Icon></PlainButton>
                </Zoom>
            </StatusSide>
        </StatusBar>

        <Caption>PPT饼图如何显示百分比？如何显示名称？怎样显示数值？</Caption>
    </Window>
)

export default App
